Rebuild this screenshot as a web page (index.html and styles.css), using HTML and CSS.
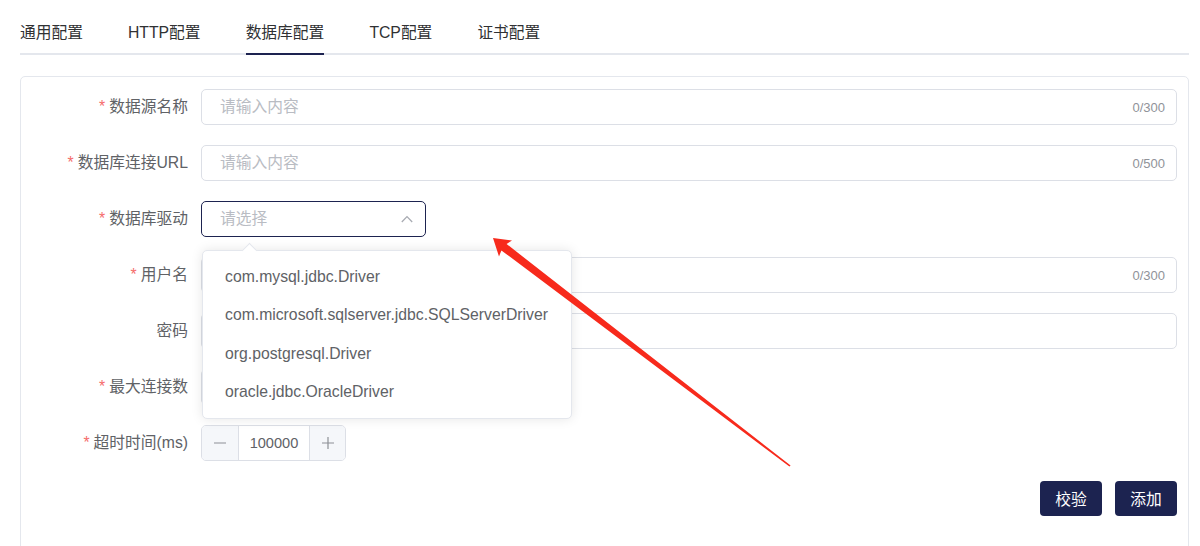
FILE: index.html
```html
<!DOCTYPE html>
<html lang="zh-CN">
<head>
<meta charset="utf-8">
<title>数据库配置</title>
<link rel="stylesheet" href="styles.css">
</head>
<body>
<div class="page">
  <nav class="tabs">
    <span class="tab">通用配置</span>
    <span class="tab">HTTP配置</span>
    <span class="tab active">数据库配置</span>
    <span class="tab">TCP配置</span>
    <span class="tab">证书配置</span>
  </nav>

  <section class="card">
    <div class="row">
      <label class="label"><span class="req">*</span>数据源名称</label>
      <div class="input"><span class="ph">请输入内容</span><span class="count">0/300</span></div>
    </div>
    <div class="row">
      <label class="label"><span class="req">*</span>数据库连接URL</label>
      <div class="input"><span class="ph">请输入内容</span><span class="count">0/500</span></div>
    </div>
    <div class="row">
      <label class="label"><span class="req">*</span>数据库驱动</label>
      <div class="select-wrap">
        <div class="select">
          <span class="ph">请选择</span>
          <svg class="chev" width="12" height="8" viewBox="0 0 12 8"><polyline points="0.8,7 6,1.6 11.2,7" fill="none" stroke="#a8abb2" stroke-width="1.3"/></svg>
        </div>
        <div class="dropdown">
          <span class="pop-arrow"></span>
          <div class="opt">com.mysql.jdbc.Driver</div>
          <div class="opt">com.microsoft.sqlserver.jdbc.SQLServerDriver</div>
          <div class="opt">org.postgresql.Driver</div>
          <div class="opt">oracle.jdbc.OracleDriver</div>
        </div>
      </div>
    </div>
    <div class="row">
      <label class="label"><span class="req">*</span>用户名</label>
      <div class="input"><span class="ph"></span><span class="count">0/300</span></div>
    </div>
    <div class="row">
      <label class="label">密码</label>
      <div class="input"><span class="ph"></span></div>
    </div>
    <div class="row">
      <label class="label"><span class="req">*</span>最大连接数</label>
      <div class="number">
        <span class="step minus"><svg width="12" height="12" viewBox="0 0 12 12"><line x1="0" y1="6" x2="12" y2="6" stroke="#8d9095" stroke-width="1.2"/></svg></span>
        <span class="num"></span>
        <span class="step plus"><svg width="12" height="12" viewBox="0 0 12 12"><line x1="0" y1="6" x2="12" y2="6" stroke="#8d9095" stroke-width="1.2"/><line x1="6" y1="0" x2="6" y2="12" stroke="#8d9095" stroke-width="1.2"/></svg></span>
      </div>
    </div>
    <div class="row">
      <label class="label"><span class="req">*</span>超时时间(ms)</label>
      <div class="number">
        <span class="step minus"><svg width="12" height="12" viewBox="0 0 12 12"><line x1="0" y1="6" x2="12" y2="6" stroke="#8d9095" stroke-width="1.2"/></svg></span>
        <span class="num">100000</span>
        <span class="step plus"><svg width="12" height="12" viewBox="0 0 12 12"><line x1="0" y1="6" x2="12" y2="6" stroke="#8d9095" stroke-width="1.2"/><line x1="6" y1="0" x2="6" y2="12" stroke="#8d9095" stroke-width="1.2"/></svg></span>
      </div>
    </div>
    <div class="actions">
      <button class="btn">校验</button>
      <button class="btn">添加</button>
    </div>
  </section>
</div>

<svg class="annot" width="1200" height="546" viewBox="0 0 1200 546">
  <polygon points="493,238 512,240.5 506.6,244 790.6,465.6 789.4,466.6 501.4,250.4 499,256.5" fill="#f72a1c"/>
</svg>
</body>
</html>
```

FILE: styles.css
```css
* { box-sizing: border-box; }

body {
  margin: 0;
  background: #fff;
  font-family: "Liberation Sans", "Noto Sans CJK SC", sans-serif;
  font-size: 15.75px;
  color: #606266;
}

.page {
  padding: 0 11px 0 20px;
  height: 546px;
  overflow: hidden;
}

.tabs {
  display: flex;
  gap: 45px;
  height: 55px;
  padding-top: 12px;
  border-bottom: 2px solid #e4e7ed;
}

.tab {
  height: 43px;
  line-height: 42px;
  color: #303133;
  border-bottom: 2px solid transparent;
}

.tab.active {
  border-bottom-color: #1d2350;
}

.card {
  margin-top: 21px;
  border: 1px solid #e4e7ed;
  border-radius: 5px;
  padding: 12px 11px 0 0;
  height: 520px;
}

.row {
  display: flex;
  align-items: center;
  height: 36px;
  margin-bottom: 20px;
}

.label {
  flex: none;
  width: 180px;
  padding-right: 13px;
  text-align: right;
  color: #606266;
  line-height: 36px;
}

.req {
  color: #f56c6c;
  margin-right: 4px;
}

.input {
  flex: 1;
  height: 36px;
  display: flex;
  align-items: center;
  justify-content: space-between;
  border: 1px solid #dcdfe6;
  border-radius: 5px;
  padding: 0 11px 0 18px;
}

.ph {
  color: #b9bcc3;
  line-height: 34px;
  margin-top: -1px;
}

.count {
  color: #909399;
  font-size: 13px;
}

.select-wrap {
  position: relative;
  width: 225px;
}

.select {
  height: 36px;
  display: flex;
  align-items: center;
  justify-content: space-between;
  border: 1px solid #1d2350;
  border-radius: 5px;
  padding: 0 12px 0 18px;
}

.chev { display: block; }

.dropdown {
  position: absolute;
  top: 49px;
  left: 1px;
  width: 370px;
  background: #fff;
  border: 1px solid #e4e7ed;
  border-radius: 5px;
  box-shadow: 0 0 12px rgba(0, 0, 0, 0.1);
  padding: 7px 0;
  z-index: 5;
}

.pop-arrow {
  position: absolute;
  top: -6px;
  left: 41px;
  width: 11px;
  height: 11px;
  background: #fff;
  border-top: 1px solid #e4e7ed;
  border-left: 1px solid #e4e7ed;
  transform: rotate(45deg);
}

.opt {
  height: 38.25px;
  line-height: 38.25px;
  padding: 0 22px;
  color: #606266;
  white-space: nowrap;
}

.number {
  width: 145px;
  height: 36px;
  display: flex;
  border: 1px solid #dcdfe6;
  border-radius: 5px;
  overflow: hidden;
}

.step {
  flex: none;
  width: 37px;
  display: flex;
  align-items: center;
  justify-content: center;
  background: #f5f7fa;
}

.minus { border-right: 1px solid #dcdfe6; }
.plus { width: 36px; border-left: 1px solid #dcdfe6; }

.num {
  flex: 1;
  display: flex;
  align-items: center;
  justify-content: center;
  color: #606266;
  font-size: 14.6px;
}

.actions {
  display: flex;
  justify-content: flex-end;
  gap: 13px;
  margin-top: 3px;
}

.btn {
  width: 62px;
  height: 35px;
  border: none;
  border-radius: 4px;
  background: #1c2350;
  color: #fff;
  font-family: inherit;
  font-size: 15.75px;
  padding: 0;
}

.annot {
  position: absolute;
  top: 0;
  left: 0;
  pointer-events: none;
  z-index: 10;
}
```
